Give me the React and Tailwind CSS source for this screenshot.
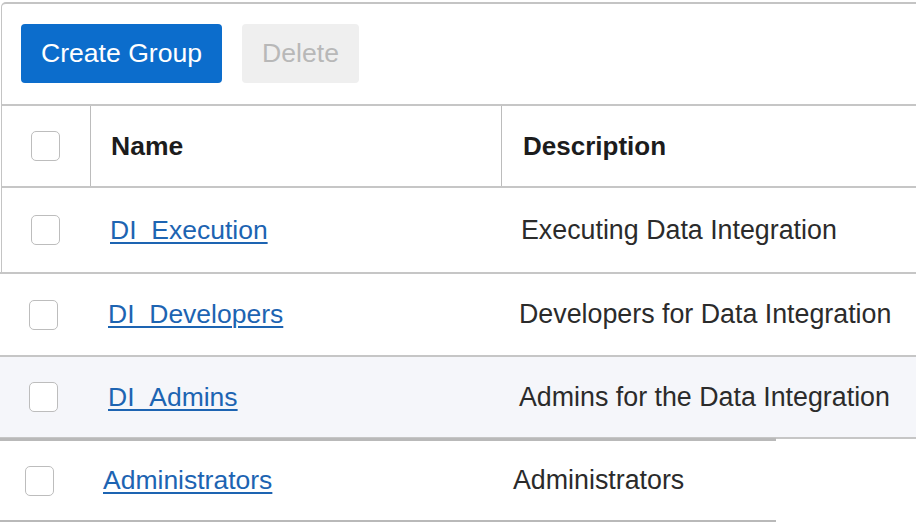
import React from 'react';

const font = { fontFamily: '"Liberation Sans", Arial, Helvetica, sans-serif' };

const Checkbox = () => (
  <span className="block w-[29px] h-[30px] rounded-[5px] border-[1.5px] border-[#bdbdbd] bg-white shrink-0" />
);

const GroupRow = ({ name, desc, rowClass, cbClass, nameClass }) => (
  <div className={`flex items-center ${rowClass}`}>
    <div className={`flex items-center shrink-0 ${cbClass}`}>
      <Checkbox />
    </div>
    <div className={`shrink-0 leading-none ${nameClass}`}>
      <a
        href="#"
        className="text-[26.5px] leading-none text-[#1d64b2] underline decoration-[1.5px] underline-offset-[3px]"
      >
        {name}
      </a>
    </div>
    <div className="text-[26.8px] leading-none text-[#2b2b2b] whitespace-nowrap">{desc}</div>
  </div>
);

const App = () => {
  return (
    <div className="w-[916px] h-[522px] bg-white overflow-hidden pt-[2px]" style={font}>
      {/* panel with toolbar, header and first row */}
      <div className="ml-[1px] border-t-2 border-l border-[#c4c4c4] rounded-tl-[5px]">
        {/* toolbar */}
        <div className="h-[100px] flex items-start gap-[20px] pt-[20px] pl-[19px]">
          <button className="w-[201px] h-[59px] rounded-[4px] bg-[#0c6dcc] text-white text-[26.6px] flex items-center justify-center">
            Create Group
          </button>
          <button
            disabled
            className="w-[117px] h-[59px] rounded-[4px] bg-[#efefef] text-[#b8b8b8] text-[26.6px] flex items-center justify-center"
          >
            Delete
          </button>
        </div>

        {/* header */}
        <div className="h-[84px] flex border-y-2 border-[#c6c6c6]">
          <div className="w-[89px] shrink-0 flex items-center pl-[29px] border-r border-[#bcbcbc]">
            <Checkbox />
          </div>
          <div className="w-[411px] shrink-0 flex items-center pl-[20px] border-r border-[#bcbcbc]">
            <span className="text-[26.5px] font-bold text-[#1c1c1c] leading-none">Name</span>
          </div>
          <div className="flex items-center pl-[21px]">
            <span className="text-[26px] font-bold text-[#1c1c1c] leading-none">Description</span>
          </div>
        </div>

        <GroupRow
          name="DI_Execution"
          desc="Executing Data Integration"
          rowClass="h-[84px]"
          cbClass="w-[108px] pl-[29px]"
          nameClass="w-[411px]"
        />
      </div>

      <GroupRow
        name="DI_Developers"
        desc="Developers for Data Integration"
        rowClass="h-[83px] border-t-2 border-[#c6c6c6]"
        cbClass="w-[108px] pl-[29px]"
        nameClass="w-[411px]"
      />

      <GroupRow
        name="DI_Admins"
        desc="Admins for the Data Integration"
        rowClass="h-[84px] border-y-2 border-[#c6c6c6] bg-[#f5f6fa]"
        cbClass="w-[108px] pl-[29px]"
        nameClass="w-[411px]"
      />

      <GroupRow
        name="Administrators"
        desc="Administrators"
        rowClass="relative -mt-[1px] w-[776px] h-[84px] border-t-[3px] border-b-2 border-[#b9b9b9] bg-white"
        cbClass="w-[103px] pl-[25px]"
        nameClass="w-[410px]"
      />
    </div>
  );
};

export default App;
